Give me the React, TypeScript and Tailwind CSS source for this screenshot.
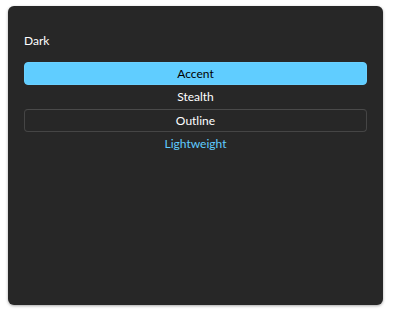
export default function App() {
  return (
    <div className="w-[395px] h-[310px] bg-white pt-[6px] pl-[8px]">
      <div
        className="w-[375px] h-[299px] bg-[#272727] rounded-[6px] shadow-[0_1px_3px_rgba(0,0,0,0.35)] px-4 pt-[27px] text-[12px] text-white"
        style={{ fontFamily: '"Segoe UI", Lato, "Open Sans", sans-serif' }}
      >
        <div className="h-4 leading-4">Dark</div>
        <div className="mt-[13px] flex flex-col">
          <button className="h-[23px] w-full rounded-[4px] bg-[#60cdff] text-black leading-none border border-[#6ad0ff]">
            Accent
          </button>
          <button className="h-[24px] w-full rounded-[4px] text-white leading-none">
            Stealth
          </button>
          <button className="h-[23px] w-full rounded-[4px] border border-[#454545] border-t-[#4a4a4a] text-white leading-none">
            Outline
          </button>
          <button className="h-[24px] w-full rounded-[4px] text-[#60cdff] leading-none">
            Lightweight
          </button>
        </div>
      </div>
    </div>
  );
}
